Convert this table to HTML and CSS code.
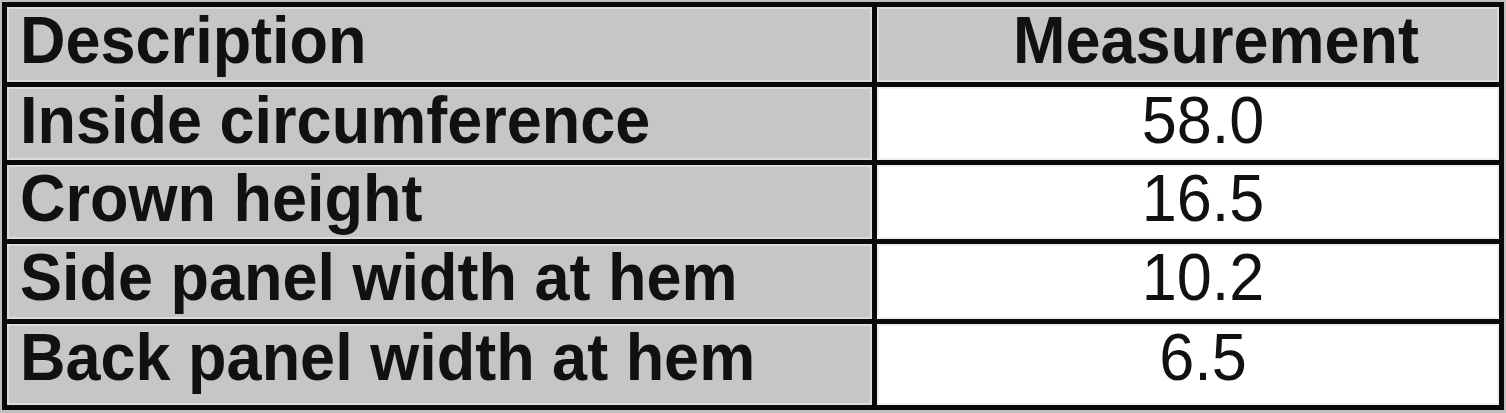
FILE: index.html
```html
<!DOCTYPE html>
<html lang="en">
<head>
<meta charset="utf-8">
<title>Measurements</title>
<link rel="stylesheet" href="styles.css">
</head>
<body>
<div class="sheet">
  <div class="cell label head"><span class="txt">Description</span></div>
  <div class="cell label head center"><span class="txt">Measurement</span></div>
  <div class="cell label"><span class="txt">Inside circumference</span></div>
  <div class="cell value"><span class="txt">58.0</span></div>
  <div class="cell label"><span class="txt">Crown height</span></div>
  <div class="cell value"><span class="txt">16.5</span></div>
  <div class="cell label"><span class="txt">Side panel width at hem</span></div>
  <div class="cell value"><span class="txt">10.2</span></div>
  <div class="cell label"><span class="txt">Back panel width at hem</span></div>
  <div class="cell value"><span class="txt">6.5</span></div>
</div>
</body>
</html>
```

FILE: styles.css
```css
html, body {
  margin: 0;
  padding: 0;
  background: #bfbfc1;
}
body {
  padding: 2px 2px 0 2px;
}
.sheet {
  display: grid;
  grid-template-columns: 865px 622px;
  grid-template-rows: 75px 73px 74px 75px 81px;
  gap: 5px;
  padding: 5px;
  width: 1502px;
  box-sizing: border-box;
  background: #0a0a0a;
  font-family: "Liberation Sans", Arial, sans-serif;
  font-size: 63px;
  line-height: 68px;
  color: #111;
}
.cell {
  padding: 0 0 0 13px;
  white-space: nowrap;
}
.txt {
  display: inline-block;
  transform: scaleY(1.06);
  transform-origin: 50% 85%;
}
.label {
  background: #c6c6c8;
  font-weight: bold;
  box-shadow: inset 0 0 0 2px #dcdcde;
}
.center {
  text-align: center;
  padding-left: 56px;
}
.value {
  background: #ffffff;
  text-align: center;
  padding-left: 30px;
  box-shadow: inset 0 0 0 2px #f0f0f0;
}
```
